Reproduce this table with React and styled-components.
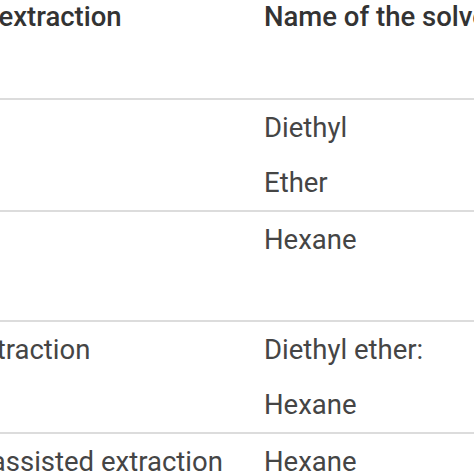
import React from "react";
import styled, { createGlobalStyle } from "styled-components";

const GlobalStyle = createGlobalStyle`
  html, body {
    margin: 0;
    padding: 0;
    background: #ffffff;
    overflow: hidden;
  }
  body {
    font-family: Roboto, "Liberation Sans", sans-serif;
  }
`;

const Viewport = styled.div`
  width: 474px;
  height: 474px;
  overflow: hidden;
`;

const Table = styled.div`
  display: flex;
  flex-direction: column;
  width: 900px;
  margin-top: -11px;
  margin-left: -149px;
  font-size: 27.5px;
  line-height: 55px;
  color: #454545;
`;

const Row = styled.div`
  display: grid;
  grid-template-columns: 413px 1fr;
  min-height: ${(p) => p.height || 108.5}px;
  border-bottom: 2px solid #dcdcdc;
`;

const HeadRow = styled(Row)`
  font-weight: 500;
  color: #333333;
`;

const Cell = styled.div`
  display: flex;
  flex-direction: column;
  white-space: nowrap;
`;

const rows = [
  { method: [], solvent: ["Diethyl", "Ether"] },
  { method: [], solvent: ["Hexane"] },
  { method: ["Classical extraction"], solvent: ["Diethyl ether:", "Hexane"] },
  { method: ["Microwave assisted extraction"], solvent: ["Hexane"] },
];

export default function App() {
  return (
    <Viewport>
      <GlobalStyle />
      <Table>
        <HeadRow>
          <Cell>
            <span>Methods of extraction</span>
          </Cell>
          <Cell>
            <span>Name of the solvent</span>
          </Cell>
        </HeadRow>
        {rows.map((r, i) => (
          <Row key={i}>
            <Cell>
              {r.method.map((t) => (
                <span key={t}>{t}</span>
              ))}
            </Cell>
            <Cell>
              {r.solvent.map((t) => (
                <span key={t}>{t}</span>
              ))}
            </Cell>
          </Row>
        ))}
      </Table>
    </Viewport>
  );
}
